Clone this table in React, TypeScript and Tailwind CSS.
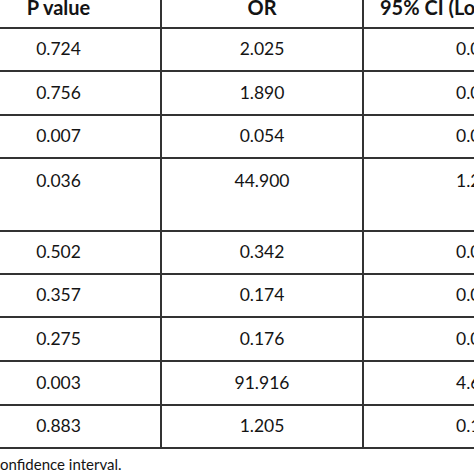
import React from "react";

const rows: { p: string; or: string; ci: string; h: string; tall?: boolean }[] = [
  { p: "0.724", or: "2.025", ci: "0.0", h: "h-[43px]" },
  { p: "0.756", or: "1.890", ci: "0.0", h: "h-[44px]" },
  { p: "0.007", or: "0.054", ci: "0.0", h: "h-[43px]" },
  { p: "0.036", or: "44.900", ci: "1.2", h: "h-[73px]", tall: true },
  { p: "0.502", or: "0.342", ci: "0.0", h: "h-[43px]" },
  { p: "0.357", or: "0.174", ci: "0.0", h: "h-[43px]" },
  { p: "0.275", or: "0.176", ci: "0.0", h: "h-[44px]" },
  { p: "0.003", or: "91.916", ci: "4.6", h: "h-[44px]" },
  { p: "0.883", or: "1.205", ci: "0.1", h: "h-[43px]" },
];

export default function App() {
  return (
    <div
      className="w-[474px] h-[474px] overflow-hidden bg-white text-[#141414]"
      style={{ fontFamily: "Lato, 'Open Sans', sans-serif" }}
    >
      <div className="-ml-[43px] w-[700px]">
        <div className="flex h-[28.5px] border-b-2 border-[#333] text-[20px] font-bold leading-[20px]">
          <div className="w-[205px] border-r-2 border-[#333] flex items-end justify-center pb-[10px]">
            P value
          </div>
          <div className="w-[202px] border-r-2 border-[#333] flex items-end justify-center pb-[10px]">
            OR
          </div>
          <div className="flex-1 flex items-end pl-[16px] pb-[10px] whitespace-nowrap">
            95% CI (Lower–Upper)
          </div>
        </div>
        {rows.map((r) => (
          <div
            key={r.p}
            className={`flex ${r.h} border-b-2 border-[#333] text-[17.5px] leading-[20px]`}
          >
            <div
              className={`w-[205px] border-r-2 border-[#333] flex justify-center ${
                r.tall ? "items-start pt-[12px]" : "items-center"
              }`}
            >
              {r.p}
            </div>
            <div
              className={`w-[202px] border-r-2 border-[#333] flex justify-center ${
                r.tall ? "items-start pt-[12px]" : "items-center"
              }`}
            >
              {r.or}
            </div>
            <div
              className={`flex-1 flex pl-[92px] whitespace-nowrap ${
                r.tall ? "items-start pt-[12px]" : "items-center"
              }`}
            >
              {r.ci}
            </div>
          </div>
        ))}
        <div className="ml-[36px] pt-[8px] text-[15px] leading-[15px]">
          confidence interval.
        </div>
      </div>
    </div>
  );
}
